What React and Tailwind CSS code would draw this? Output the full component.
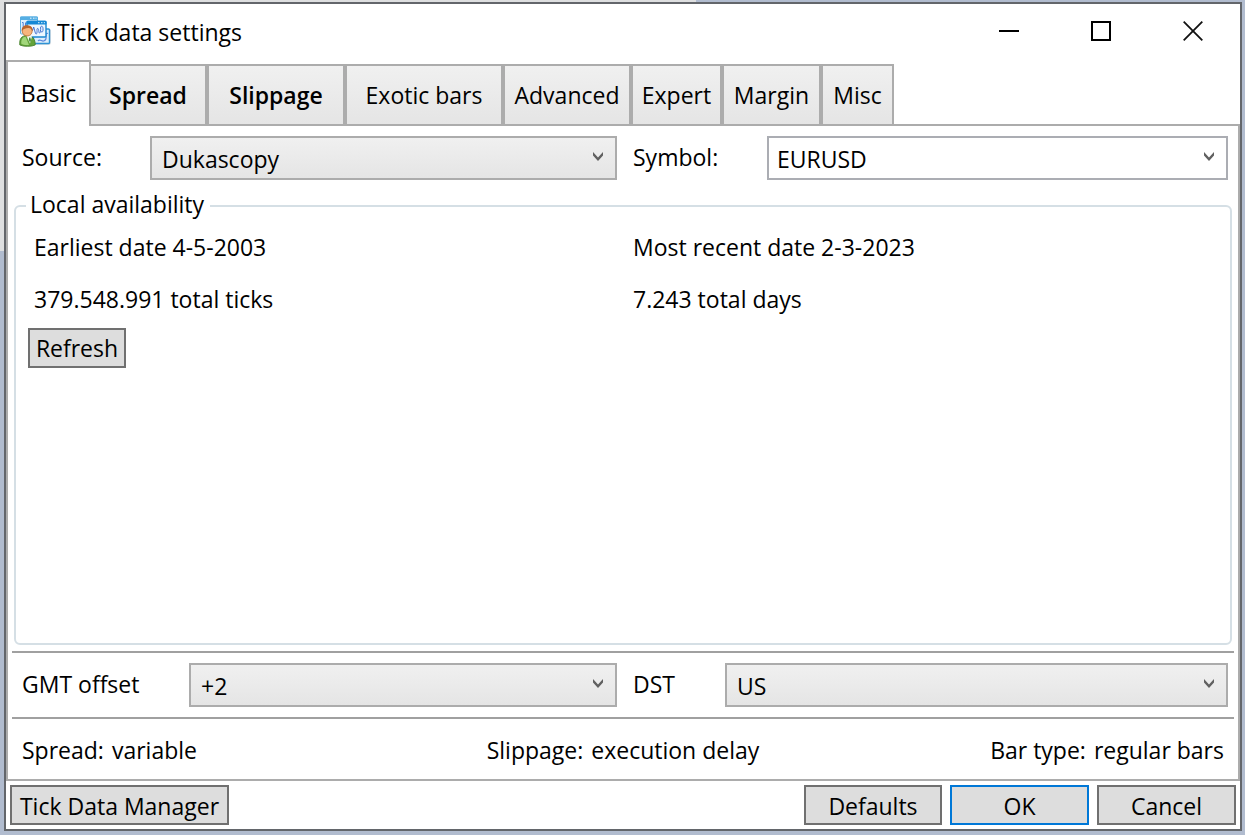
import React from "react";

const tabs = [
  { label: "Spread", className: "-ml-0.5 w-[118px] font-semibold" },
  { label: "Slippage", className: "w-[138px] font-semibold" },
  { label: "Exotic bars", className: "w-[158px]" },
  { label: "Advanced", className: "w-[128px]" },
  { label: "Expert", className: "w-[91px]" },
  { label: "Margin", className: "w-[99px]" },
  { label: "Misc", className: "w-[73px]" },
];

function AppIcon() {
  return (
    <svg width="32" height="32" viewBox="0 0 32 32" aria-hidden="true">
      <rect x="15" y="13" width="16.5" height="15.5" rx="1" fill="#8c99a5" opacity=".6" />
      <rect x="1.5" y="1" width="17" height="17" rx="1" fill="#dff0fc" stroke="#5fb0e2" />
      <rect x="1" y="0.5" width="18" height="3.5" rx="1" fill="#56aee3" />
      <path d="M11 2.2h1.5M14 2.2h1.5M16.5 2.2h1" stroke="#e8f6ff" strokeWidth="1" />
      <path d="M3 6.5h1.2v6M6.5 6.5v5" stroke="#4f7fd6" strokeWidth="1" fill="none" />
      <rect x="14.5" y="13" width="16" height="14.500" rx="1" fill="#dceefb" stroke="#2f93d4" strokeWidth="1.400" />
      <path d="M19 25c2-2.500 3.500.5 5.500 0s3-2 2.500-5 .8-3 2-2.500" stroke="#5c86dc" strokeWidth="1.200" fill="none" />
      <rect x="8" y="5.500" width="19" height="15.500" rx="1" fill="#edf7ff" stroke="#1b86d0" strokeWidth="1.400" />
      <rect x="7.500" y="4.800" width="20" height="3.800" rx="1" fill="#1688d5" />
      <path d="M19 6.700h1.500M22 6.700h1.500M24.800 6.700h1.200" stroke="#d8f0ff" strokeWidth="1" />
      <path d="M12 11.500l1.500 3 1.200-3.500 1.800 6.500c1 1.500 1.800-.5 1.500-3s1.500-3 1.700 0 1 3.500 1.700 1-.5-5 1-5.200 1.800 2 1.600 4-1.600 2.500-2 .8" stroke="#4673cf" strokeWidth="1" fill="none" />
      <path d="M.8 29c-.6-6 1.700-9.500 7-9.500s8.700 3.500 8.400 9.500c-3.400 1.800-12 1.800-15.400 0z" fill="#64a33a" stroke="#427e29" strokeWidth=".8" />
      <path d="M2.200 27.500c0-4 1.200-6.300 4.300-7l3.500 8.500c-3 .3-6 0-7.800-1.500z" fill="#a2d77b" />
      <path d="M7.500 20l3.500 7.500 2-7-2.500-1.500z" fill="#f3f7ee" />
      <path d="M10.200 21.500l1.100 0 .7 2.500-.9 2.500-1.200-2.500z" fill="#3f8a35" />
      <circle cx="8.200" cy="15" r="5" fill="#f6b57d" stroke="#b86324" strokeWidth=".7" />
      <path d="M2.800 15c-.5-4 2.200-6 5.700-5.800 3.500.1 5.600 2.500 4.900 6.100-1-2.600-2.500-3.600-4.200-3.300-2.600.4-4.600.6-6.400 3z" fill="#b9642b" />
    </svg>
  );
}

function Select({ id, value, options, editable }) {
  return (
    <div className="relative min-w-0 flex-1">
      <select
        id={id}
        defaultValue={value}
        className={
          editable
            ? "block h-11 w-full appearance-none border-2 border-[#abadb3] bg-white pt-0.5 pr-8 pl-2 text-black outline-none"
            : "block h-11 w-full appearance-none border-2 border-[#acacac] bg-linear-to-b from-[#f0f0f0] to-[#e5e5e5] pt-0.5 pr-8 pl-2.5 text-black outline-none"
        }
      >
        {options.map((o) => (
          <option key={o}>{o}</option>
        ))}
      </select>
      <svg
        className="pointer-events-none absolute top-4 right-3.5"
        width="10"
        height="9"
        viewBox="0 0 10 9"
        aria-hidden="true"
      >
        <path d="M0 0l5 5.400L10 0v3.600L5 9 0 3.600z" fill="#606060" />
      </svg>
    </div>
  );
}

function PushButton({ children, className }) {
  return (
    <button type="button" className={"h-10 border-2 bg-[#dddddd] whitespace-nowrap " + className}>
      {children}
    </button>
  );
}

export default function App() {
  return (
    <div className="flex min-h-screen flex-col bg-white pr-1.5 pb-0.5 font-['Open_Sans','Noto_Sans',sans-serif] text-[23px] leading-8 text-black">
      <div className="relative flex flex-1 flex-col bg-[#b1bccf] pt-0.5 pr-[3px] pb-1 pl-1">
        <div className="absolute top-0 left-0 h-[251px] w-[696px] bg-[#dedfe0]" />
        <main className="relative flex flex-1 flex-col border-2 border-[#63666b] bg-white">
          <header className="flex h-14 items-start pr-px">
            <div className="flex flex-1 items-center gap-1.5 pt-3 pl-[13px]">
              <AppIcon />
              <h1 className="whitespace-nowrap">Tick data settings</h1>
            </div>
            <button type="button" aria-label="Minimize" className="flex h-[54px] w-[92px] items-center justify-center">
              <svg width="20" height="20" viewBox="0 0 20 20">
                <path d="M0 10h20" stroke="#000" strokeWidth="2" />
              </svg>
            </button>
            <button type="button" aria-label="Maximize" className="flex h-[54px] w-[92px] items-center justify-center">
              <svg width="20" height="20" viewBox="0 0 20 20">
                <path d="M1 1h18v18H1z" fill="none" stroke="#000" strokeWidth="2" />
              </svg>
            </button>
            <button type="button" aria-label="Close" className="flex h-[54px] w-[92px] items-center justify-center">
              <svg width="20" height="20" viewBox="0 0 20 20">
                <path d="M.7.7l18.600 18.600M19.300.7L.7 19.300" stroke="#111" strokeWidth="1.800" />
              </svg>
            </button>
          </header>

          <div role="tablist" className="flex items-end whitespace-nowrap">
            <button
              type="button"
              role="tab"
              aria-selected="true"
              className="relative z-10 h-[66px] w-[85px] border-2 border-b-0 border-[#acacac] bg-white pb-0.5"
            >
              Basic
            </button>
            {tabs.map((t) => (
              <button
                key={t.label}
                type="button"
                role="tab"
                aria-selected="false"
                className={
                  "h-[62px] border-2 border-[#acacac] bg-linear-to-b from-[#f0f0f0] to-[#e5e5e5] " + t.className
                }
              >
                {t.label}
              </button>
            ))}
            <div className="flex-1 border-b-2 border-[#acacac]" />
          </div>

          <section role="tabpanel" className="flex flex-1 flex-col border-x-2 border-b-2 border-[#acacac] px-1 pt-2.5">
            <div className="grid grid-cols-2">
              <div className="flex items-center pr-1.5 pl-2.5">
                <label htmlFor="source" className="w-32 pb-0.5">Source:</label>
                <Select id="source" value="Dukascopy" options={["Dukascopy"]} />
              </div>
              <div className="flex items-center pr-1.5 pl-2.5">
                <label htmlFor="symbol" className="w-[134px] pb-0.5">Symbol:</label>
                <Select id="symbol" value="EURUSD" options={["EURUSD"]} editable />
              </div>
            </div>

            <fieldset className="mx-0.5 mt-2 flex-1 rounded-md border-2 border-[#d5dfe5]">
              <legend className="ml-2.5 pr-1.5 pb-1 pl-1">Local availability</legend>
              <div className="-mt-[3px] grid grid-cols-2 leading-[52px]">
                <p className="pl-[18px]">Earliest date 4-5-2003</p>
                <p className="pl-2.5">Most recent date 2-3-2023</p>
                <p className="pl-[18px]">379.548.991 total ticks</p>
                <p className="pl-2.5">7.243 total days</p>
              </div>
              <PushButton className="mt-[3px] ml-3 w-[98px] border-[#707070]">Refresh</PushButton>
            </fieldset>

            <div className="mt-1.5 grid grid-cols-2 border-y-2 border-[#a0a0a0] py-2.5">
              <div className="flex items-center pr-1.5 pl-2.5">
                <label htmlFor="gmt" className="w-[167px] pb-0.5">GMT offset</label>
                <Select id="gmt" value="+2" options={["+2"]} />
              </div>
              <div className="flex items-center pr-1.5 pl-2.5">
                <label htmlFor="dst" className="w-[92px] pb-0.5">DST</label>
                <Select id="dst" value="US" options={["US"]} />
              </div>
            </div>

            <div className="grid h-[60px] grid-cols-3 items-center px-2.5 pt-0.5 whitespace-nowrap">
              <p className="flex gap-2"><span>Spread:</span><span>variable</span></p>
              <p className="flex justify-center gap-2"><span>Slippage:</span><span>execution delay</span></p>
              <p className="flex justify-end gap-2"><span>Bar type:</span><span>regular bars</span></p>
            </div>
          </section>

          <footer className="flex gap-2 p-1">
            <PushButton className="mr-auto w-[219px] border-[#707070] pt-0.5">Tick Data Manager</PushButton>
            <PushButton className="w-[138px] border-[#707070] pt-0.5">Defaults</PushButton>
            <PushButton className="w-[139px] border-[#0078d7] pt-0.5">OK</PushButton>
            <PushButton className="w-[139px] border-[#707070] pt-0.5">Cancel</PushButton>
          </footer>
        </main>
      </div>
    </div>
  );
}
